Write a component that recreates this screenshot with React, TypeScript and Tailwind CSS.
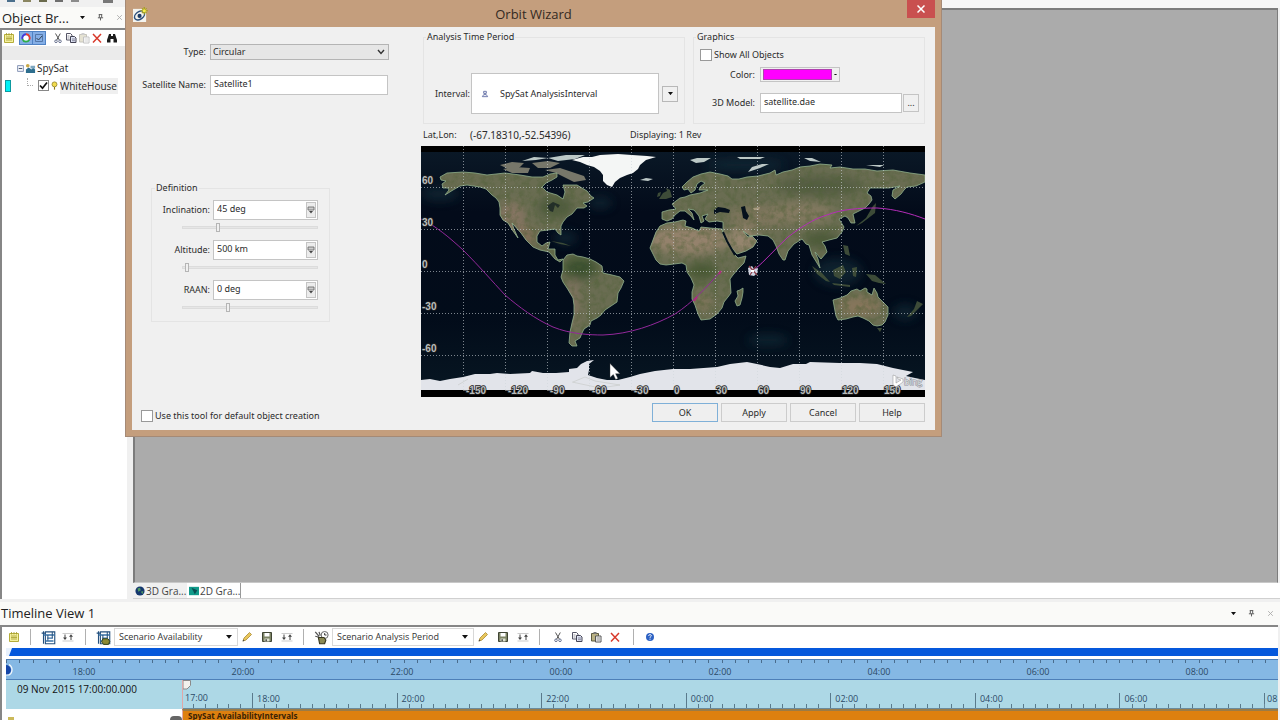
import type { ReactNode } from 'react';

const MENU_SCRAPS = [
  { id: 'a', cls: 'w-2 bg-[#4b6f8c]' },
  { id: 'b', cls: 'w-2 bg-[#8a8560]' },
  { id: 'c', cls: 'w-2 bg-[#6b6b4d]' },
  { id: 'd', cls: 'w-2 bg-[#6e6e6e]' },
  { id: 'e', cls: 'w-2 bg-[#8b8b8b]' },
];

const DEFINITION = [
  { id: 'inclination', label: 'Inclination:', value: '45 deg', max: 180, pos: 45 },
  { id: 'altitude', label: 'Altitude:', value: '500 km', max: 40000, pos: 500 },
  { id: 'raan', label: 'RAAN:', value: '0 deg', max: 360, pos: 120 },
];

const OVERVIEW_HOURS = ['18:00', '20:00', '22:00', '00:00', '02:00', '04:00', '06:00', '08:00'];
const DETAIL_HOURS = ['18:00', '20:00', '22:00', '00:00', '02:00', '04:00', '06:00'];
const TICKS = Array.from({ length: 12 }, (_, i) => i);

const LAND = [
  // north america
  'M440 177 447 173 463 172 475 173 487 175 505 173 520 175 532 177 543 177 550 174 557 173 557 177 552 180 546 183 542 187 547 192 557 195 563 199 565 192 563 185 572 185 577 185 582 188 587 191 591 196 594 198 588 202 583 203 587 206 584 208 577 208 572 214 567 217 563 222 561 226 561 235 558 233 555 229 548 230 540 231 537 236 537 242 542 246 546 243 550 242 548 249 555 249 555 255 558 260 563 259 560 262 555 259 549 252 540 250 533 247 526 240 521 233 512 223 514 229 518 238 513 231 508 223 503 220 500 215 500 208 499 202 496 198 492 195 486 189 480 187 467 185 460 186 453 190 445 195 449 190 448 188 443 188 442 184 446 181 441 180Z',
  // south america
  'M563 260 567 255 573 254 577 256 583 257 590 259 596 262 602 266 603 273 612 275 620 277 624 281 621 288 618 293 617 302 611 306 605 310 601 315 597 318 591 321 590 325 584 329 582 333 580 338 575 341 577 346 572 346 569 343 570 332 572 323 574 315 574 305 573 298 570 293 567 288 563 282 561 277 563 270Z',
  // africa
  'M660 226 667 223 675 222 683 220 686 221 685 226 692 228 699 231 701 227 710 228 722 229 724 237 730 247 735 255 738 258 746 256 744 263 738 269 733 275 730 279 731 293 728 297 724 302 722 308 717 314 710 319 701 320 698 314 695 305 692 299 692 292 694 285 691 278 687 272 686 265 682 263 674 264 666 265 660 264 656 260 653 254 650 248 653 240 656 232Z',
  'M737 291 740 290 743 288 743 292 742 298 740 305 737 306 735 301 738 296Z',
  // europe and asia
  'M662 212 662 219 667 221 672 219 675 215 680 211 685 211 691 216 694 220 692 213 688 209 694 210 699 216 701 223 704 221 702 216 708 214 705 219 709 222 717 221 723 222 723 231 727 240 731 247 737 254 746 251 753 247 757 241 752 236 748 237 743 231 750 236 759 235 768 236 773 240 776 246 779 254 783 260 785 260 788 251 794 244 802 239 806 244 809 245 812 255 817 263 820 268 818 259 815 252 821 259 827 252 825 246 822 242 829 240 837 238 842 232 844 227 839 219 845 216 848 218 851 223 855 223 853 214 859 211 865 208 869 204 872 200 871 196 867 193 870 188 880 188 889 188 900 186 893 190 892 196 895 199 901 194 904 190 907 187 916 186 925 182 925 175 910 173 893 170 877 171 865 169 853 169 840 167 830 168 832 165 820 164 810 166 800 167 792 170 783 172 776 175 775 170 770 173 758 176 747 177 739 179 732 179 728 176 720 174 710 172 701 174 693 177 687 182 682 187 684 190 688 189 691 193 695 190 697 184 701 181 705 183 700 187 699 190 708 190 700 193 690 195 685 197 680 198 672 204 676 209 669 210Z',
  // australia
  'M833 300 840 298 847 295 851 291 857 289 860 291 865 288 867 289 867 292 872 295 874 288 877 293 878 297 883 302 888 307 888 315 885 322 882 325 877 326 873 325 869 321 863 318 858 316 853 317 846 319 838 320 836 316 835 311Z',
];

const GREENLAND = 'M572 160 583 157 592 157 600 155 618 154 632 155 647 156 656 157 646 160 640 165 638 169 633 173 627 175 620 178 615 182 612 187 607 185 603 181 603 175 600 171 594 167 587 165 580 162Z';
const ANTARCTICA = 'M421 380 430 379 440 381 450 379 463 377 475 374 490 374 497 373 510 374 530 373 532 371 543 373 556 373 569 372 569 369 577 368 581 364 587 361 594 360 589 364 589 370 588 375 597 378 607 380 618 380 630 377 640 374 655 371 673 369 690 369 717 367 730 364 747 362 757 364 770 367 780 368 793 364 806 364 810 362 840 363 860 363 877 364 893 368 913 372 906 376 915 378 925 380V390H421Z';

const TERRAIN = [
  { cx: 512, cy: 218, rx: 14, ry: 16, fill: '#857462' },
  { cx: 525, cy: 236, rx: 11, ry: 9, fill: '#837059' },
  { cx: 555, cy: 207, rx: 18, ry: 11, fill: '#4f5b3e' },
  { cx: 580, cy: 268, rx: 17, ry: 11, fill: '#3a4f2e' },
  { cx: 573, cy: 303, rx: 4, ry: 26, fill: '#8c7668' },
  { cx: 688, cy: 240, rx: 40, ry: 14, fill: '#94826c' },
  { cx: 702, cy: 271, rx: 16, ry: 9, fill: '#4a5936' },
  { cx: 703, cy: 302, rx: 9, ry: 10, fill: '#7e755a' },
  { cx: 742, cy: 240, rx: 16, ry: 13, fill: '#95856e' },
  { cx: 760, cy: 217, rx: 32, ry: 12, fill: '#7d745c' },
  { cx: 800, cy: 213, rx: 34, ry: 11, fill: '#837961' },
  { cx: 822, cy: 240, rx: 18, ry: 9, fill: '#4d5a3a' },
  { cx: 820, cy: 186, rx: 44, ry: 10, fill: '#545d43' },
  { cx: 860, cy: 306, rx: 22, ry: 10, fill: '#86765b' },
];

const ISLES = 'M500 165 512 162 524 163 520 167 508 169ZM503 169 515 167 530 168 528 173 512 173ZM532 163 548 161 560 163 550 168 538 168ZM545 170 560 168 572 172 584 176 586 180 574 182 566 178 556 173Z';
const ARCTIC_ICE = 'M522 161 534 157 548 158 536 160ZM548 158 566 155 585 155 575 159 558 161ZM690 160 697 158 711 158 704 162 696 163ZM737 157 765 157 760 159 740 159ZM748 172 752 167 762 164 769 164 760 168ZM804 158 812 158 821 162 810 161ZM866 165 884 165 880 167ZM640 180 646 178 653 179 648 181Z';
const DIM_ISLANDS = 'M659 199 663 193 667 191 666 188 670 190 672 197 666 199ZM660 196 657 197 658 193 661 192ZM812 266 822 273 830 282 826 281 817 274ZM833 270 843 265 846 272 840 279 834 276ZM866 274 875 275 886 284 879 283 872 281ZM832 283 850 285 850 287 834 285ZM852 268 857 267 856 277 853 276ZM866 218 873 206 876 203 875 213 862 223 856 226ZM917 301 923 304 911 316 907 317 914 309ZM551 241 563 243 571 246 560 244ZM843 245 848 246 850 256 845 254ZM877 328 882 328 880 332Z';

function Arrow({ className = 'w-[7px]' }: { className?: string }) {
  return (
    <svg viewBox="0 0 8 5" className={className} aria-hidden>
      <path d="M0 0h8L4 5z" fill="#111" />
    </svg>
  );
}

function Icon({ children, className = 'size-3' }: { children: ReactNode; className?: string }) {
  return (
    <svg viewBox="0 0 12 12" fill="none" className={`shrink-0 ${className}`} aria-hidden>
      {children}
    </svg>
  );
}

const NoteIcon = () => (
  <Icon>
    <path d="M1.5 2.5h9v8h-9z" fill="#f6f2a0" stroke="#b5ad3a" />
    <path d="M3 5h6M3 6.5h6M3 8h6M3.5 1v2.500M6 1v2.500M8.500 1v2.500" stroke="#a39b2c" strokeWidth=".8" />
  </Icon>
);
const CutIcon = () => (
  <Icon>
    <path d="M3.500 1.500 7.300 8M8.300 1.500 4.700 8" stroke="#555" />
    <circle cx="4" cy="9.300" r="1.300" stroke="#6a7390" />
    <circle cx="8" cy="9.300" r="1.300" stroke="#6a7390" />
  </Icon>
);
const CopyIcon = () => (
  <Icon>
    <path d="M1.500 1.500h4l1.500 1.500v5h-5.500z" fill="#fff" stroke="#556" />
    <path d="M5.500 4.500h4l1.500 1.500v4.500h-5.500z" fill="#dfe4f5" stroke="#445" />
    <path d="M2.500 4h2M2.500 6h2M7 7h3M7 8.700h3" stroke="#667" strokeWidth=".7" />
  </Icon>
);
const PasteIcon = ({ dim = false }: { dim?: boolean }) => (
  <Icon className={dim ? 'size-3 opacity-35' : 'size-3'}>
    <path d="M1.500 2.500h7v7.500h-7z" fill="#b9b184" stroke="#5d5a3e" />
    <path d="M3.500 1h3v2h-3z" fill="#777" />
    <path d="M5.500 5h5.500v6H5.500z" fill="#fff" stroke="#555" />
    <path d="M6.500 7h3.500M6.500 9h3.500" stroke="#666" strokeWidth=".8" />
  </Icon>
);
const DeleteIcon = () => (
  <Icon>
    <path d="m2 2 8 8.500M10 2l-8 8.500" stroke="#d8392b" strokeWidth="1.500" />
  </Icon>
);
const PencilIcon = () => (
  <Icon>
    <path d="m2 10 1-3 5.500-5.500 2 2L5 9z" fill="#e9c75c" stroke="#a98a35" strokeWidth=".8" />
    <path d="m1.500 10.500.8-2 1.200 1.200z" fill="#444" />
  </Icon>
);
const SaveIcon = () => (
  <Icon>
    <path d="M1.500 1.500h9v9h-9z" fill="#7d8465" stroke="#3f4434" />
    <path d="M3.500 2h5v3.500h-5z" fill="#fff" />
    <path d="M3.500 7.500h5v3h-5z" fill="#dfe3d2" />
    <path d="M4.500 8.200h1.300v2H4.500z" fill="#333" />
  </Icon>
);
const FitIcon = () => (
  <Icon>
    <path d="M.5 2.500h11M.5 10h11" stroke="#aaa" strokeWidth=".6" />
    <path d="M3 3.500v4M9 9V5" stroke="#444" />
    <path d="M1 6.500h4L3 9zM7 5.800h4L9 3.300z" fill="#444" />
  </Icon>
);
const ScenarioIcon = ({ marker = false }: { marker?: boolean }) => (
  <Icon className="size-[15px]">
    <path d="M2 1v10M.5 2.500h3M3.500 1.500h7.500v9.500H3.500z" stroke="#24507e" strokeWidth=".9" />
    <path d="M2 4h9M5 6.500h4.500M3.500 8.800H10" stroke="#3a73a8" strokeWidth="1.100" />
    <path d="M5.500 4v4.500M9 1.500v5" stroke="#24507e" strokeWidth=".8" />
    {marker && <path d="M5.500 7h4l1.500 2-1 2.500H6L4.500 9.500z" fill="#8c8a35" stroke="#33451e" strokeWidth=".8" />}
  </Icon>
);
const PeriodIcon = () => (
  <Icon className="size-[15px]">
    <path d="m1 1.500 3 3.500M1 5l4 1M4 1.500l1 3" stroke="#555" />
    <circle cx="8.500" cy="4" r="2.800" fill="#fff" stroke="#666" strokeWidth=".8" />
    <path d="M8.500 2.500V4H10" stroke="#333" strokeWidth=".8" />
    <path d="M3.500 6h4.500l1.500 2-1 3h-4z" fill="#8c8a55" stroke="#37371f" strokeWidth=".9" />
  </Icon>
);
const HelpIcon = () => (
  <Icon>
    <circle cx="6" cy="6" r="4" fill="#2d62c4" />
    <path d="M4.700 5c0-2 2.700-1.700 2.600-.2C7.200 5.800 6 5.600 6 6.800M6 7.700v1" stroke="#fff" />
  </Icon>
);
const BinocularsIcon = () => (
  <Icon>
    <path d="M3 2h2v2h2V2h2l2 6v2.500H7.500V7h-3v3.500H1V8z" fill="#1c1c1c" />
  </Icon>
);

function PaneControls() {
  return (
    <>
      <button aria-label="Menu"><Arrow className="w-[5px]" /></button>
      <button aria-label="Pin">
        <Icon className="size-[7px]">
          <path d="M3 1h6M4 1v5M8 1v5M1.500 6.500h9M6 6.500V11" stroke="#555" strokeWidth="1.600" />
        </Icon>
      </button>
      <button aria-label="Close">
        <Icon className="size-[7px]"><path d="m2 2 8 8M10 2l-8 8" stroke="#aaa" strokeWidth="1.500" /></Icon>
      </button>
    </>
  );
}

function ObjectBrowser() {
  return (
    <aside className="flex w-[127px] shrink-0 flex-col font-['Open_Sans',sans-serif]">
      <div className="flex h-[7px] items-start gap-2 bg-[#f0f0f0] pl-[7px]">
        {MENU_SCRAPS.map(s => <span key={s.id} className={`h-0.5 ${s.cls}`} />)}
        <span className="ml-4 h-[3px] w-2.5 bg-[#777]" />
      </div>
      <div className="flex h-[21px] items-center gap-3 bg-[#fafaf8] pl-0.5">
        <h2 className="w-[66px] shrink-0 text-[13px] leading-5 whitespace-nowrap text-[#222]">Object Br...</h2>
        <PaneControls />
      </div>
      <div className="flex flex-1 flex-col border-t-2 border-l-2 border-[#868686] bg-white">
        <div className="flex h-4 items-center gap-0.5 pl-px">
          <button aria-label="Properties"><NoteIcon /></button>
          <span className="mr-1 ml-0.5 flex border border-[#4f82c4] bg-[#84aee6]">
            <button aria-label="Colors">
              <Icon>
                <path d="M6 2.300a3.700 3.700 0 0 1 3.200 5.500" stroke="#e83a2e" strokeWidth="2" />
                <path d="M9.200 7.800A3.700 3.700 0 0 1 2.500 7" stroke="#2fae4a" strokeWidth="2" />
                <path d="M2.500 7A3.700 3.700 0 0 1 6 2.300" stroke="#4338d8" strokeWidth="2" />
                <circle cx="6" cy="6" r="2.600" fill="#fff" />
              </Icon>
            </button>
            <button aria-label="Check boxes" className="border-l border-[#4f82c4]">
              <Icon><path d="M2.500 2.500h7v7h-7z" stroke="#5377a8" /><path d="m3.500 6 2 2 3.500-4" stroke="#345" /></Icon>
            </button>
          </span>
          <div className="flex gap-px">
            <button aria-label="Cut"><CutIcon /></button>
            <button aria-label="Copy"><CopyIcon /></button>
            <button aria-label="Paste"><PasteIcon dim /></button>
            <button aria-label="Delete"><DeleteIcon /></button>
            <button aria-label="Find" className="ml-0.5"><BinocularsIcon /></button>
          </div>
        </div>
        <div className="h-3.5 bg-[#ebebeb]" />
        <ul className="text-[10px] text-[#222]">
          <li className="flex h-[17px] items-center gap-px pl-[15px]">
            <Icon className="size-[7px]">
              <path d="M1 1h10v10H1z" fill="#f2f4fa" stroke="#7d8db0" strokeWidth="1.500" />
              <path d="M3 6h6" stroke="#345" strokeWidth="1.500" />
            </Icon>
            <Icon className="size-[11px]">
              <path d="M1 11V7l3-2 3 2 2-2 2 2v4z" fill="#2e6e8e" />
              <circle cx="3" cy="3" r="2" fill="#c9a94a" />
              <path d="M6 3h5v3H6z" fill="#7fa7c0" />
            </Icon>
            SpySat
          </li>
          <li className="flex h-[17px] items-center pl-[3px]">
            <span className="h-3 w-1.5 border border-[#0d9aa0] bg-[#00f0f5]" />
            <span className="mb-2 ml-4 h-2 w-1.5 border-b border-l border-dotted border-[#aaa]" />
            <label className="ml-[5px] flex items-center gap-px">
              <span className="relative flex">
                <input type="checkbox" defaultChecked className="size-[11px] appearance-none border border-[#888] bg-white" />
                <svg viewBox="0 0 11 11" className="pointer-events-none absolute inset-0 size-[11px]">
                  <path d="m2 5.500 2.500 2.700L9 2.500" fill="none" stroke="#111" strokeWidth="1.700" />
                </svg>
              </span>
              <Icon className="size-[9px]">
                <circle cx="6" cy="4.500" r="3.300" fill="#f2dc4e" stroke="#8a7a1a" />
                <path d="M6 8v3.500" stroke="#8a7a1a" strokeWidth="1.500" />
              </Icon>
              <span className="bg-[#efefef] pr-px leading-4">WhiteHouse</span>
            </label>
          </li>
        </ul>
      </div>
    </aside>
  );
}

function OrbitMap() {
  const lons = [463, 505, 547, 589, 631, 673, 715, 757, 799, 841, 883];
  const lonText = ['-150', '-120', '-90', '-60', '-30', '0', '30', '60', '90', '120', '150'];
  const lats = [187, 229, 271, 313, 355];
  const latText = ['60', '30', '0', '-30', '-60'];
  return (
    <svg viewBox="421 146 504 251" className="block w-full font-['Liberation_Sans_Narrow','Liberation_Sans',sans-serif]" role="img" aria-label="Ground track">
      <defs>
        <clipPath id="land">{LAND.map((d, i) => <path key={i} d={d} />)}</clipPath>
        <filter id="soft"><feGaussianBlur stdDeviation="5" /></filter>
        <filter id="fuzz"><feGaussianBlur stdDeviation="0.6" /></filter>
        <filter id="grain" x="0" y="0" width="1" height="1">
          <feTurbulence type="fractalNoise" baseFrequency="0.16" numOctaves="4" seed="4" />
          <feColorMatrix values="0 0 0 0 0.08  0 0 0 0 0.12  0 0 0 0 0.04  2.6 0 0 0 -1.05" />
        </filter>
        <linearGradient id="sea" x1="0" y1="0" x2="0" y2="1">
          <stop offset="0" stopColor="#0a1826" />
          <stop offset=".25" stopColor="#030b1a" />
          <stop offset=".7" stopColor="#020c1a" />
          <stop offset="1" stopColor="#071622" />
        </linearGradient>
      </defs>
      <rect x="421" y="146" width="504" height="251" fill="#000" />
      <rect x="421" y="152" width="504" height="238" fill="url(#sea)" />
      <g filter="url(#soft)" fill="#12303c" opacity=".55">
        <ellipse cx="565" cy="238" rx="12" ry="7" />
        <ellipse cx="440" cy="194" rx="18" ry="7" />
        <ellipse cx="600" cy="203" rx="12" ry="6" />
        <ellipse cx="838" cy="272" rx="24" ry="14" />
        <ellipse cx="905" cy="312" rx="12" ry="8" />
        <ellipse cx="768" cy="340" rx="20" ry="6" />
        <ellipse cx="745" cy="165" rx="40" ry="6" />
      </g>
      <g filter="url(#fuzz)">
        <path d={ISLES} fill="#77776a" />
        <path d={ARCTIC_ICE} fill="#bcc8c6" />
        <path d={DIM_ISLANDS} fill="#3c4c37" />
        <path d={GREENLAND} fill="#f4f6f5" />
      </g>
      <g clipPath="url(#land)">
        <rect x="421" y="146" width="504" height="251" fill="#6a6d52" />
        <g filter="url(#soft)">
          {TERRAIN.map(t => <ellipse key={`${t.cx}-${t.cy}`} {...t} />)}
        </g>
        <rect x="421" y="146" width="504" height="251" filter="url(#grain)" opacity=".5" />
      </g>
      <path d={LAND.join('')} fill="none" stroke="#8fae8c" strokeWidth=".8" />
      <path d="M714 210 718 207 725 208 730 210 729 213 720 212 714 214ZM741 207 745 206 746 211 749 216 747 220 743 218 742 212Z" fill="#05101c" />
      <path d="m723 232 4 9 5 9 3 5" fill="none" stroke="#05101c" strokeWidth="2" />
      <path d="M547 206 553 202 560 205 558 208 555 205 553 212 550 211Z" fill="#232f28" />
      <path d="M753 208 760 207 759 210 754 210Z" fill="#c9b69c" opacity=".6" />
      <path d={ANTARCTICA} fill="#e2e4ea" />
      <path d="m573 382 12-5 10 4 25 4-20 3-28-6M458 385l10-6" fill="none" stroke="#c4c8c4" strokeWidth=".6" />
      <g stroke="#cfd6da" strokeWidth=".8" strokeDasharray="1 2" opacity=".75">
        {lons.map(x => <path key={x} d={`M${x}.500 146V390`} />)}
        {lats.map(y => <path key={y} d={`M421 ${y}.500H925`} />)}
      </g>
      <g fill="none" stroke="#93289b" strokeWidth="1">
        <path d="M421 219C436 226 450 238 463 250C480 267 492 281 505 295C519 307 535 319 553 327C570 334 590 335 603 335C630 334 655 325 675 314C692 303 708 286 720 272" />
        <path d="M753 271C765 261 777 247 788 237C800 228 813 219 827 215C842 209 860 208 877 208C895 209 912 214 925 219" stroke="#b42cb8" />
      </g>
      <path d="M694 301l3-4M719 274l2-3" stroke="#b02c7c" strokeWidth="2" />
      <g>
        <path d="m748 268 4-2 2 3 4-1-1 5-3 3-5-1z" fill="#cfd2e0" />
        <path d="m749 266 8 9M756 266l-6 9" stroke="#8c3b46" strokeWidth="1.200" />
        <path d="M751 270h3v2h-3z" fill="#fff" />
      </g>
      <g fill="#b9bdbd" stroke="#222" strokeWidth="1.500" paintOrder="stroke" fontSize="10" fontWeight="bold">
        {latText.map((t, i) => <text key={t} x="422" y={lats[i] - 3}>{t}</text>)}
        {lonText.map((t, i) => <text key={t} x={lons[i] + (t.startsWith('-') ? 3 : 1)} y="394">{t}</text>)}
      </g>
      <path d="M463 390.500h5M505 390.500h5M547 390.500h5M589 390.500h5M631 390.500h5" stroke="#666" />
      <path d="m893 375 3 1v7l5-3-3-1-1-2 6 2v3l-7 5-3-2z" fill="#fff" stroke="#777" strokeWidth=".4" />
      <text x="904" y="385" fontSize="9" fill="#e2e4e8" stroke="#8b8f96" strokeWidth="1" paintOrder="stroke" className="font-['Open_Sans']">bing</text>
      <path d="M610 363.500v14l3.300-3 2.400 5 2.200-1-2.300-4.800h4.400z" fill="#fff" stroke="#333" strokeWidth=".4" />
    </svg>
  );
}

function OrbitWizard() {
  const button = 'h-[19px] w-[66px] border bg-[#efefef]';
  const field = 'h-5 border border-[#c4c4c4] bg-white px-[3px] pb-[3px]';
  return (
    <div role="dialog" aria-label="Orbit Wizard" className="absolute top-0 left-[125px] flex w-[817px] flex-col border border-t-0 border-[#a58a76] bg-[#c49e7d] px-1.5 pb-1.5 font-['Noto_Sans',sans-serif] text-[9px] leading-3 text-[#2b2b2b]">
      <div className="flex h-[27px] items-center justify-between">
        <svg viewBox="0 0 16 16" className="mt-px ml-px size-[15px]" aria-hidden>
          <path d="M0 2h14v14H0z" fill="#f3f3ee" />
          <ellipse cx="7" cy="9" rx="6" ry="4" transform="rotate(-38 7 9)" fill="none" stroke="#2c4f7c" strokeWidth="1.600" />
          <circle cx="7" cy="9.500" r="2.200" fill="#1d3c66" />
          <path d="M12 0v8M8 4h8M9.500 1.500l5 5M14.500 1.500l-5 5" stroke="#a5a018" strokeWidth="1.300" />
          <circle cx="12" cy="4" r="1.700" fill="#f7f04a" />
        </svg>
        <h1 className="pl-3 font-['Open_Sans',sans-serif] text-[13px] text-[#33291f]">Orbit Wizard</h1>
        <button aria-label="Close" className="flex h-[18px] w-7 items-center justify-center self-start bg-[#c9504f]">
          <svg viewBox="0 0 8 8" className="size-2"><path d="m.5.5 7 7M7.500.5l-7 7" stroke="#fff" strokeWidth="1.500" /></svg>
        </button>
      </div>

      <div className="flex bg-[#f0f0f0] pb-2">
        <div className="flex w-[289px] shrink-0 flex-col pt-[17px]">
          <div className="flex items-center">
            <label htmlFor="type" className="w-[78px] pr-1 text-right">Type:</label>
            <span className="relative flex w-[179px] items-center">
              <select id="type" className="h-4 w-full appearance-none border border-[#b4b4b4] bg-[#e6e6e6] px-0.5 leading-3">
                <option>Circular</option>
              </select>
              <svg viewBox="0 0 8 6" className="pointer-events-none absolute right-1 w-2"><path d="m1 1 3 3.500L7 1" fill="none" stroke="#333" strokeWidth="1.400" /></svg>
            </span>
          </div>
          <div className="mt-[15px] flex items-center">
            <label htmlFor="name" className="w-[78px] pr-1 text-right">Satellite Name:</label>
            <input id="name" defaultValue="Satellite1" className={`${field} w-[178px]`} />
          </div>

          <fieldset className="mt-[87px] ml-[19px] w-[179px] border border-[#e4e4e4] pb-2">
            <legend className="ml-[3px] px-px">Definition</legend>
            <div className="mt-1.5 flex flex-col gap-[7px]">
              {DEFINITION.map(d => (
                <div key={d.id}>
                  <div className="flex items-center">
                    <label htmlFor={d.id} className="w-[61px] pr-[3px] text-right">{d.label}</label>
                    <span className="relative flex w-[105px] items-center">
                      <input id={d.id} defaultValue={d.value} className={`${field} w-full`} />
                      <button aria-label={`${d.label} units`} className="absolute right-0.5 flex h-4 w-2.5 items-center justify-center border border-[#c4c4c4] bg-[#ececec]">
                        <svg viewBox="0 0 8 10" className="w-2"><path d="M1 2h6v3H1z" fill="#ccc" stroke="#666" strokeWidth=".8" /><path d="M2 6h4L4 8.500z" fill="#444" /></svg>
                      </button>
                    </span>
                  </div>
                  <input
                    type="range"
                    aria-label={d.label}
                    max={d.max}
                    defaultValue={d.pos}
                    className="mt-px ml-[30px] block h-3 w-[136px] appearance-none bg-transparent [&::-webkit-slider-runnable-track]:h-[3px] [&::-webkit-slider-runnable-track]:border [&::-webkit-slider-runnable-track]:border-[#dcdcdc] [&::-webkit-slider-runnable-track]:bg-[#e6e6e6] [&::-webkit-slider-thumb]:-mt-[4px] [&::-webkit-slider-thumb]:h-[9px] [&::-webkit-slider-thumb]:w-1 [&::-webkit-slider-thumb]:appearance-none [&::-webkit-slider-thumb]:border [&::-webkit-slider-thumb]:border-[#b5b5b5] [&::-webkit-slider-thumb]:bg-[#f0f0f0]"
                  />
                </div>
              ))}
            </div>
          </fieldset>

          <label className="mt-auto ml-[9px] flex items-center gap-0.5">
            <input type="checkbox" className="size-3 appearance-none border border-[#999] bg-white" />
            Use this tool for default object creation
          </label>
        </div>

        <div className="w-[504px] pt-1">
          <div className="flex h-[93px] gap-2 pl-0.5">
            <fieldset className="w-[262px] border border-[#e4e4e4]">
              <legend className="ml-0.5 px-px">Analysis Time Period</legend>
              <div className="mt-[30px] flex items-center">
                <span className="w-[47px] pr-px text-right">Interval:</span>
                <div className="flex h-[41px] w-[188px] items-center gap-[11px] border border-[#c4c4c4] bg-white pl-[9px]">
                  <Icon className="size-2"><path d="M4 2h4v3H4zM6 5v2M2 10l2-3h4l2 3z" stroke="#6672a8" strokeWidth="1.400" /></Icon>
                  SpySat AnalysisInterval
                </div>
                <button aria-label="Choose interval" className="ml-[3px] flex size-4 items-center justify-center border border-[#b8b8b8] bg-[#f0f0f0]">
                  <Arrow className="w-[5px]" />
                </button>
              </div>
            </fieldset>
            <fieldset className="flex-1 border border-[#e4e4e4]">
              <legend className="ml-0.5 px-px">Graphics</legend>
              <label className="mt-1.5 ml-1.5 flex items-center gap-0.5">
                <input type="checkbox" className="size-3 appearance-none border border-[#999] bg-white" />
                Show All Objects
              </label>
              <div className="mt-1.5 flex items-center">
                <span className="w-[66px] pr-[5px] text-right">Color:</span>
                <button aria-label="Color" className="flex h-[15px] w-20 items-center border border-[#c4c4c4] bg-[#f0f0f0] pl-0.5">
                  <span className="h-[11px] w-[69px] border border-[#b040b0] bg-[#ff00ff]" />
                  <span className="ml-0.5"><Arrow className="w-[3px]" /></span>
                </button>
              </div>
              <div className="mt-[11px] flex items-center">
                <label htmlFor="model" className="w-[66px] pr-[5px] text-right">3D Model:</label>
                <input id="model" defaultValue="satellite.dae" className={`${field} w-[142px]`} />
                <button className="ml-px h-[18px] w-4 border border-[#c4c4c4]" aria-label="Browse">...</button>
              </div>
            </fieldset>
          </div>
          <div className="flex h-[22px] items-center pl-0.5">
            <span className="w-[47px]">Lat,Lon:</span>
            <span className="w-40 text-[10px]">(-67.18310,-52.54396)</span>
            <span>Displaying: 1 Rev</span>
          </div>
          <OrbitMap />
          <div className="mt-1.5 flex justify-end gap-[3px]">
            <button className={`${button} border-[#7fb0d8]`}>OK</button>
            <button className={`${button} border-[#cccccc]`}>Apply</button>
            <button className={`${button} border-[#cccccc]`}>Cancel</button>
            <button className={`${button} border-[#cccccc]`}>Help</button>
          </div>
        </div>
      </div>
    </div>
  );
}

function Workspace() {
  return (
    <main className="flex min-w-0 flex-1 flex-col pl-1.5">
      <div className="h-2 bg-[#f6f6f6]" />
      <div className="mr-0.5 flex-1 border-2 border-r border-b border-[#7c7c7c] border-b-[#c8c8c8] bg-[#ababab]" />
      <div role="tablist" className="flex h-4 items-stretch border-b border-[#d0d0d0] bg-white font-['Open_Sans',sans-serif] text-[10px] leading-4 whitespace-nowrap text-[#444]">
        <button role="tab" aria-selected={false} className="flex w-[54px] items-center gap-px bg-[#f0f0f0] pl-0.5">
          <Icon className="size-[10px]">
            <circle cx="6" cy="6" r="5.500" fill="#14376e" />
            <path d="M3 3 6 2l1 3-3 2zM7 7l3-1-1 4z" fill="#4f9a62" />
          </Icon>
          3D Gra...
        </button>
        <button role="tab" aria-selected className="flex w-[54px] items-center gap-px border-r border-[#999] pl-0.5">
          <Icon className="size-[10px]">
            <path d="M0 1h12v10H0z" fill="#119a8a" />
            <path d="m3 2 7 3-3 5z" fill="#0a4e52" />
          </Icon>
          2D Gra...
        </button>
      </div>
    </main>
  );
}

function Separator() {
  return <span className="h-4 w-px bg-[#b0b0b0]" />;
}

function Picker({ label, width }: { label: string; width: string }) {
  return (
    <span className={`relative flex items-center ${width}`}>
      <select aria-label={label} className="h-[18px] w-full appearance-none border border-[#d8d8d8] bg-white px-1 text-[9px] text-[#333]">
        <option>{label}</option>
      </select>
      <Arrow className="pointer-events-none absolute right-1.5 w-1.5" />
    </span>
  );
}

function Timeline() {
  return (
    <section className="shrink-0 pt-[3px] font-['Open_Sans',sans-serif]">
      <div className="flex h-[23px] items-center justify-between bg-[#fafaf8] pr-1.5 pl-px">
        <h2 className="text-[13px] text-[#222]">Timeline View 1</h2>
        <div className="flex items-center gap-3"><PaneControls /></div>
      </div>
      <div className="mr-0.5 border-t-2 border-l-2 border-[#868686] bg-white">
        <div className="flex h-5 items-center">
          <button aria-label="Properties" className="mr-2.5 ml-1.5"><NoteIcon /></button>
          <Separator />
          <button aria-label="Scenario" className="mr-1.5 ml-2.5"><ScenarioIcon /></button>
          <button aria-label="Fit" className="mr-[11px]"><FitIcon /></button>
          <Separator />
          <button aria-label="Availability" className="mr-[3px] ml-2.5"><ScenarioIcon marker /></button>
          <Picker label="Scenario Availability" width="w-[124px]" />
          <div className="flex gap-2 pr-2.5 pl-[3px]">
            <button aria-label="Edit availability"><PencilIcon /></button>
            <button aria-label="Save availability"><SaveIcon /></button>
            <button aria-label="Fit availability"><FitIcon /></button>
          </div>
          <Separator />
          <button aria-label="Period" className="mr-[3px] ml-2.5"><PeriodIcon /></button>
          <Picker label="Scenario Analysis Period" width="w-[142px]" />
          <div className="flex gap-2 pr-2.5 pl-[3px]">
            <button aria-label="Edit period"><PencilIcon /></button>
            <button aria-label="Save period"><SaveIcon /></button>
            <button aria-label="Fit period"><FitIcon /></button>
          </div>
          <Separator />
          <div className="flex gap-[7px] px-3">
            <button aria-label="Cut"><CutIcon /></button>
            <button aria-label="Copy"><CopyIcon /></button>
            <button aria-label="Paste"><PasteIcon /></button>
            <button aria-label="Delete"><DeleteIcon /></button>
          </div>
          <Separator />
          <button aria-label="Help" className="ml-2.5"><HelpIcon /></button>
        </div>

        <div className="ml-1">
          <div className="mt-px flex h-2 bg-[#0558dc]">
            <svg viewBox="0 0 6 8" className="h-2"><path d="M0 0h6L3 8H0z" fill="#e8f1fc" /></svg>
          </div>
          <div className="mt-[3px] flex h-[21px] border-t border-b border-[#4d7fb8] bg-[#85b8e4]">
            {OVERVIEW_HOURS.map((h, i) => (
              <div key={h} className="relative flex flex-1 flex-col">
                <div className="flex">
                  {TICKS.map(t => <span key={t} className="h-[3px] flex-1 border-l border-[#4a6c8c]" />)}
                </div>
                <span className="pt-[3px] pr-[3px] text-center text-[9px] leading-[11px] text-[#2c4a66]">{h}</span>
                {i === 0 && (
                  <svg viewBox="0 0 8 12" className="absolute top-1 left-0 h-3">
                    <path d="M0 1a5 5 0 0 1 0 10z" fill="#1546a8" />
                    <path d="M3 .5a6 6 0 0 1 0 10.500H0" fill="none" stroke="#f2f6fb" strokeWidth="1.200" />
                  </svg>
                )}
              </div>
            ))}
          </div>
          <div className="flex h-[29px] bg-[#add8e6]">
            <div className="w-[176px] shrink-0 pl-[11px] text-[10px] leading-[19px] text-[#111]">09 Nov 2015 17:00:00.000</div>
            <div className="flex w-[70px] shrink-0 flex-col justify-between border-l border-[#e0a8a8]">
              <svg viewBox="0 0 8 10" className="h-2.5 w-2"><path d="M0 .5h7.500v5L4 9H0z" fill="#f2f2ee" stroke="#8a8a8a" /></svg>
              <span className="pl-0.5 text-[9px] leading-[13px] text-[#2c4a66]">17:00</span>
              <div className="flex border-b border-[#6b8b9c] pl-2.5">
                {TICKS.slice(0, 5).map(t => <span key={t} className="h-1 w-3 border-l border-[#5a7a8c]" />)}
              </div>
            </div>
            {DETAIL_HOURS.map(h => (
              <div key={h} className="flex flex-1 flex-col justify-end">
                <span className="border-l border-[#5a7a8c] pl-1 text-[9px] leading-[11px] text-[#2c4a66]">{h}</span>
                <div className="flex border-b border-[#6b8b9c]">
                  {TICKS.map(t => <span key={t} className="h-1 flex-1 border-l border-[#5a7a8c]" />)}
                </div>
              </div>
            ))}
            <div className="flex w-[14px] shrink-0 flex-col justify-end">
              <span className="border-l border-[#5a7a8c] pl-0.5 text-[9px] leading-[11px] text-[#2c4a66]">08</span>
              <span className="h-[5px] border-b border-l border-[#6b8b9c]" />
            </div>
          </div>
          <div className="flex h-[11px]">
            <div className="flex w-[176px] shrink-0 items-end justify-between bg-white pl-0.5">
              <span className="h-[3px] w-1.5 bg-[#cbb95a]" />
              <span className="h-1 w-3 rounded-t-lg bg-[#666]" />
            </div>
            <div className="flex-1 border-t-2 border-l border-t-[#9b7b46] border-l-[#e0a8a8] bg-[#dd800f] pl-[5px] text-[8px] leading-[10px] font-bold text-[#3a2205]">
              SpySat AvailabilityIntervals
            </div>
          </div>
        </div>
      </div>
    </section>
  );
}

export default function App() {
  return (
    <div className="relative flex h-screen flex-col overflow-hidden bg-[#f0f0f0]">
      <div className="flex min-h-0 flex-1">
        <ObjectBrowser />
        <Workspace />
      </div>
      <Timeline />
      <OrbitWizard />
    </div>
  );
}
